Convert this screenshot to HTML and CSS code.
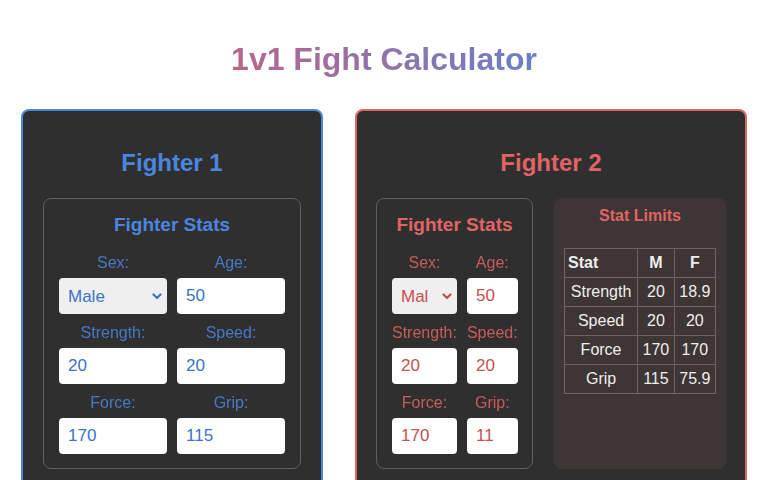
FILE: index.html
```html
<!DOCTYPE html>
<html lang="en">
<head>
    <meta charset="UTF-8">
    <title>1v1 Fight Calculator</title>
    <link rel="stylesheet" href="styles.css">
</head>
<body>
<h1 class="title">1v1 Fight Calculator</h1>
<div class="arena">
    <div class="fighter fighter-one">
        <h2 class="fighter-name">Fighter 1</h2>
        <div class="stats">
            <h3 class="stats-title">Fighter Stats</h3>
            <div class="stats-grid">
                <div class="field">
                    <label>Sex:</label>
                    <div class="select-wrap">
                        <select><option>Male</option><option>Female</option></select>
                        <svg class="chevron" viewBox="0 0 10 7"><path d="M1.5 1.5 L5 5 L8.5 1.5" /></svg>
                    </div>
                </div>
                <div class="field">
                    <label>Age:</label>
                    <input type="text" value="50">
                </div>
                <div class="field">
                    <label>Strength:</label>
                    <input type="text" value="20">
                </div>
                <div class="field">
                    <label>Speed:</label>
                    <input type="text" value="20">
                </div>
                <div class="field">
                    <label>Force:</label>
                    <input type="text" value="170">
                </div>
                <div class="field">
                    <label>Grip:</label>
                    <input type="text" value="115">
                </div>
            </div>
        </div>
    </div>

    <div class="fighter fighter-two">
        <h2 class="fighter-name">Fighter 2</h2>
        <div class="fighter-body">
            <div class="stats stats-narrow">
                <h3 class="stats-title">Fighter Stats</h3>
                <div class="stats-grid">
                    <div class="field">
                        <label>Sex:</label>
                        <div class="select-wrap">
                            <select><option>Male</option><option>Female</option></select>
                            <svg class="chevron" viewBox="0 0 10 7"><path d="M1.5 1.5 L5 5 L8.5 1.5" /></svg>
                        </div>
                    </div>
                    <div class="field">
                        <label>Age:</label>
                        <input type="text" value="50">
                    </div>
                    <div class="field">
                        <label>Strength:</label>
                        <input type="text" value="20">
                    </div>
                    <div class="field">
                        <label>Speed:</label>
                        <input type="text" value="20">
                    </div>
                    <div class="field">
                        <label>Force:</label>
                        <input type="text" value="170">
                    </div>
                    <div class="field">
                        <label>Grip:</label>
                        <input type="text" value="11">
                    </div>
                </div>
            </div>
            <div class="limits">
                <h3 class="limits-title">Stat Limits</h3>
                <table class="limits-table">
                    <tr><th class="th-stat">Stat</th><th>M</th><th>F</th></tr>
                    <tr><td>Strength</td><td>20</td><td>18.9</td></tr>
                    <tr><td>Speed</td><td>20</td><td>20</td></tr>
                    <tr><td>Force</td><td>170</td><td>170</td></tr>
                    <tr><td>Grip</td><td>115</td><td>75.9</td></tr>
                </table>
            </div>
        </div>
    </div>
</div>
</body>
</html>
```

FILE: styles.css
```css
* {
    box-sizing: border-box;
}

body {
    margin: 0;
    background-color: #ffffff;
    font-family: "Liberation Sans", Arial, sans-serif;
}

.title {
    width: fit-content;
    margin: 40px auto 31px;
    font-size: 32px;
    line-height: 38px;
    font-weight: bold;
    white-space: nowrap;
    background: linear-gradient(90deg, #b8668a, #6a80c8);
    -webkit-background-clip: text;
    background-clip: text;
    color: transparent;
}

.arena {
    display: flex;
    gap: 32px;
    padding: 0 21px;
}

.fighter {
    background-color: #2f2f2f;
    border: 2px solid #4a86e0;
    border-radius: 8px;
    padding: 20px;
    height: 420px;
}

.fighter-one {
    width: 302px;
    color: #4a86e0;
}

.fighter-two {
    width: 392px;
    padding: 20px 19px;
    border-color: #e06464;
    color: #e06464;
}

.fighter-name {
    margin: 18px 0 21px;
    text-align: center;
    font-size: 24px;
    line-height: 28px;
}

.fighter-body {
    display: flex;
    gap: 21px;
}

.stats {
    border: 1px solid #5e5e5e;
    border-radius: 8px;
    padding: 15px 15px 14px;
}

.stats-narrow {
    flex: 0 0 157px;
    width: 157px;
}

.stats-title {
    margin: 0 0 8px;
    text-align: center;
    font-size: 19px;
    line-height: 22px;
}

.stats-grid {
    display: grid;
    grid-template-columns: 1fr 1fr;
    column-gap: 10px;
    row-gap: 10px;
}

.field {
    display: flex;
    flex-direction: column;
}

.field label {
    display: block;
    text-align: center;
    font-size: 16px;
    line-height: 18px;
    margin: 10px 0 6px;
    opacity: 0.85;
    white-space: nowrap;
}

.field:nth-child(n+3) label {
    margin-top: 0;
}

.field input,
.field select {
    width: 100%;
    min-width: 0;
    height: 36px;
    border: none;
    border-radius: 4px;
    padding: 0 8px 0 9px;
    font-family: "Liberation Sans", Arial, sans-serif;
    font-size: 17px;
    outline: none;
}

.field input {
    background-color: #ffffff;
}

.fighter-one input,
.fighter-one select {
    color: #3b72cc;
}

.fighter-two input,
.fighter-two select {
    color: #c84e50;
}

.select-wrap {
    position: relative;
    min-width: 0;
}

.field select {
    -webkit-appearance: none;
    appearance: none;
    background-color: #efefef;
    padding-right: 28px;
}

.chevron {
    position: absolute;
    right: 5px;
    top: 15px;
    width: 10px;
    height: 7px;
    fill: none;
    stroke: currentColor;
    stroke-width: 2.2;
    stroke-linecap: round;
    stroke-linejoin: round;
    pointer-events: none;
}

.fighter-one .chevron {
    color: #3b72cc;
}

.fighter-two .chevron {
    color: #c84e50;
}

.limits {
    flex: 1;
    background-color: #3e3535;
    border-radius: 8px;
    padding: 9px 10px 10px;
}

.limits-title {
    margin: 0 0 23px;
    text-align: center;
    font-size: 16px;
    line-height: 18px;
    color: #e06464;
}

.limits-table {
    width: 100%;
    border-collapse: collapse;
    color: #eeeeee;
}

.limits-table th,
.limits-table td {
    border: 1px solid #6e6666;
    padding: 5px 3px;
    font-size: 16px;
    line-height: 18px;
    text-align: center;
}

.limits-table .th-stat {
    text-align: left;
}
```
